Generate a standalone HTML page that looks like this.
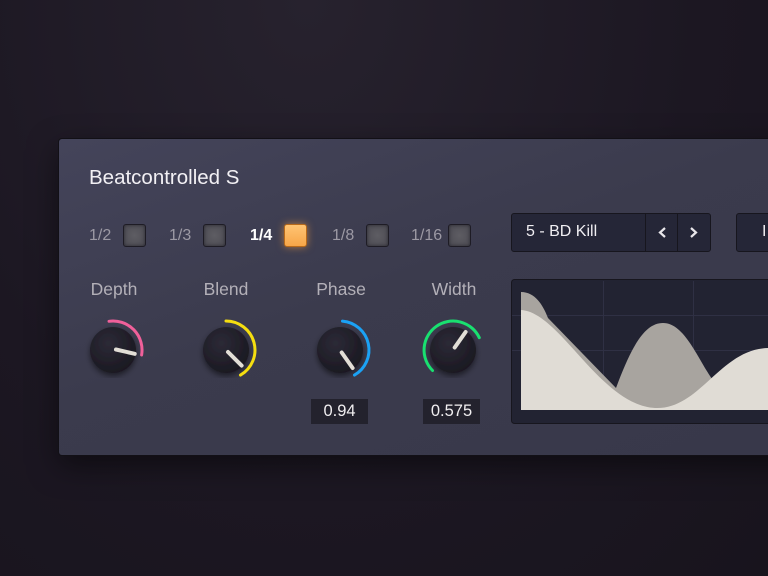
<!DOCTYPE html>
<html><head><meta charset="utf-8"><style>
html,body{margin:0;padding:0;width:768px;height:576px;overflow:hidden;background:radial-gradient(ellipse at 40% 0%,#27222e 0%,#1c1722 60%,#18141d 100%);font-family:"Liberation Sans",sans-serif;}
.panel{position:absolute;left:59px;top:139px;width:740px;height:316px;border-radius:3px;background:linear-gradient(160deg,#44445a 0%,#3b3b4d 45%,#38384a 100%);box-shadow:0 0 0 1px #121016,0 10px 30px rgba(0,0,0,.5);}
.t{position:absolute;color:#f2f0f4;font-size:20.5px;left:89px;top:166px;}
.l{position:absolute;color:#9c99a4;font-size:16px;top:227px;}
.cb{position:absolute;top:224px;width:21px;height:21px;border:1px solid #1e1c25;border-radius:3px;background:radial-gradient(#5e5d63,#4b4a52);box-shadow:inset 0 0 3px #2a2930;}
.k{position:absolute;color:#b3b0b8;font-size:17.5px;top:279px;width:80px;text-align:center;}
.v{position:absolute;top:399px;height:25px;background:#23222d;color:#f0eef0;font-size:16.5px;line-height:25px;text-align:center;}
.dd{position:absolute;left:511px;top:213px;width:198px;height:37px;background:#252637;border:1px solid #17161e;border-radius:3px;}
</style></head><body>
<div class="panel"></div>
<div class="t">Beatcontrolled S</div>
<div class="l" style="left:89px">1/2</div><div class="cb" style="left:123px"></div>
<div class="l" style="left:169px">1/3</div><div class="cb" style="left:203px"></div>
<div class="l" style="left:250px;color:#fff;font-weight:bold">1/4</div><div class="cb" style="left:284px;background:linear-gradient(#ffc473,#f7a648);border-color:#b86a1a;box-shadow:0 0 8px rgba(255,160,60,.6)"></div>
<div class="l" style="left:332px">1/8</div><div class="cb" style="left:366px"></div>
<div class="l" style="left:411px">1/16</div><div class="cb" style="left:448px"></div>
<div class="k" style="left:74px">Depth</div>
<div class="k" style="left:186px">Blend</div>
<div class="k" style="left:301px">Phase</div>
<div class="k" style="left:414px">Width</div>
<div class="v" style="left:311px;width:57px">0.94</div>
<div class="v" style="left:423px;width:57px">0.575</div>
<div class="dd"><span style="position:absolute;left:14px;top:9px;color:#f0eef2;font-size:16px">5 - BD Kill</span>
<div style="position:absolute;left:133px;top:0;width:1px;height:37px;background:#17161e"></div>
<div style="position:absolute;left:165px;top:0;width:1px;height:37px;background:#17161e"></div>
<svg style="position:absolute;left:134px;top:0" width="64" height="37"><path d="M19 14 L14 18.5 L19 23" stroke="#e8e6ea" stroke-width="2.2" fill="none"/><path d="M45 14 L50 18.5 L45 23" stroke="#e8e6ea" stroke-width="2.2" fill="none"/></svg></div>
<div style="position:absolute;left:736px;top:213px;width:60px;height:37px;background:#252637;border:1px solid #17161e;border-radius:3px;"><span style="position:absolute;left:25px;top:9px;color:#f0eef2;font-size:16px">I</span></div>
<svg style="position:absolute;left:0;top:0" width="768" height="576">
<defs><radialGradient id="kg" cx="40%" cy="35%" r="70%"><stop offset="0" stop-color="#2c2a36"/><stop offset="1" stop-color="#1a1821"/></radialGradient>
<filter id="sh"><feDropShadow dx="0" dy="3" stdDeviation="3" flood-color="#000" flood-opacity=".5"/></filter></defs>
<g filter="url(#sh)">
<circle cx="113" cy="350" r="23" fill="url(#kg)"/><circle cx="226" cy="350" r="23" fill="url(#kg)"/><circle cx="340" cy="350" r="23" fill="url(#kg)"/><circle cx="453" cy="350" r="23" fill="url(#kg)"/></g>
<g fill="none" stroke-width="3" stroke-linecap="round">
<path d="M109 321.3 A29 29 0 0 1 141.6 355" stroke="#f0609a"/>
<path d="M226 321 A29 29 0 0 1 240.5 375.1" stroke="#f5de10"/>
<path d="M342.5 321.1 A29 29 0 0 1 354.5 375.1" stroke="#1ba2f5"/>
<path d="M432.5 370.5 A29 29 0 1 1 479.3 337.7" stroke="#19e070"/>
</g>
<g stroke="#e2ded6" stroke-width="4" stroke-linecap="round">
<line x1="116" y1="349.5" x2="134.7" y2="353.8"/>
<line x1="228" y1="352" x2="241.6" y2="365.6"/>
<line x1="341.7" y1="352.5" x2="352.6" y2="368"/>
<line x1="454.7" y1="347.5" x2="465.6" y2="332"/>
</g>
<rect x="511.5" y="279.5" width="270" height="144" rx="3" fill="#222332" stroke="#17161e"/>
<g stroke="#2f3044" stroke-width="1"><line x1="603.5" y1="281" x2="603.5" y2="410"/><line x1="693.5" y1="281" x2="693.5" y2="410"/><line x1="512" y1="315.5" x2="768" y2="315.5"/><line x1="512" y1="350.5" x2="768" y2="350.5"/></g>
<path d="M521 410 L521 292 C535 292 543 305 548 318 L616 388 C632 345 645 323 663 323 C685 323 698 360 713 380 L713 410 Z" fill="#a8a49f"/>
<path d="M521 410 L521 310 C560 312 600 405 655 408 C700 410 720 349 768 348 L768 410 Z" fill="#e0dcd5"/>
</svg>
</body></html>
